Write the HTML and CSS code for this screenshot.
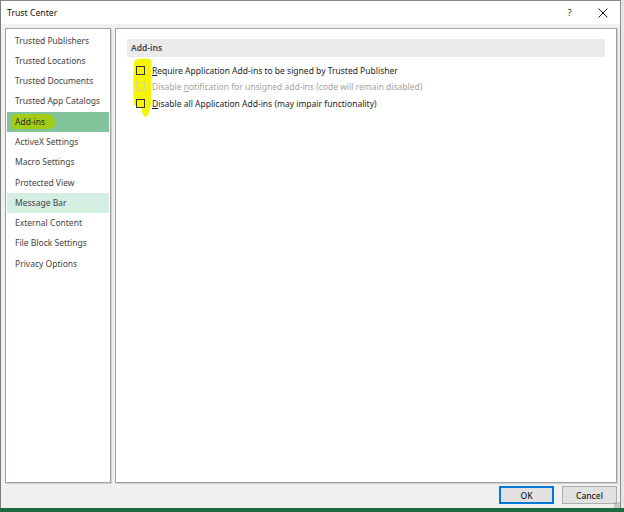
FILE: index.html
```html
<!DOCTYPE html>
<html>
<head>
<meta charset="utf-8">
<title>Trust Center</title>
<link rel="stylesheet" href="styles.css">
</head>
<body>
<div class="screen">
  <div class="window">
    <div class="titlebar">
      <span class="title">Trust Center</span>
      <span class="tb-btn help">?</span>
      <span class="tb-btn close">
        <svg width="10" height="10" viewBox="0 0 10 10"><path d="M0.5 0.5 L9.5 9.5 M9.5 0.5 L0.5 9.5" stroke="#222" stroke-width="1" fill="none"/></svg>
      </span>
    </div>
    <div class="body">
      <ul class="nav">
        <li>Trusted Publishers</li>
        <li>Trusted Locations</li>
        <li>Trusted Documents</li>
        <li>Trusted App Catalogs</li>
        <li class="selected"><span class="marker"></span><span class="label">Add-ins</span></li>
        <li>ActiveX Settings</li>
        <li>Macro Settings</li>
        <li>Protected View</li>
        <li class="hover">Message Bar</li>
        <li>External Content</li>
        <li>File Block Settings</li>
        <li>Privacy Options</li>
      </ul>
      <div class="main">
        <div class="section-head">Add-ins</div>
        <div class="options">
          <svg class="highlight" width="22" height="62" viewBox="0 0 22 62">
            <path d="M2.5 3 C6 0 15 0 19 2 L19 46 C18 52 16.5 57 14.5 58.5 C11.5 60 10 55 9.5 50 L2 47 C1 35 1 15 2.5 3 Z" fill="#f5f500"/>
          </svg>
          <label class="opt"><span class="box"></span><span><u>R</u>equire Application Add-ins to be signed by Trusted Publisher</span></label>
          <label class="opt disabled"><span class="box"></span><span>Disable <u>n</u>otification for unsigned add-ins (code will remain disabled)</span></label>
          <label class="opt"><span class="box"></span><span><u>D</u>isable all Application Add-ins (may impair functionality)</span></label>
        </div>
      </div>
    </div>
    <div class="footer">
      <button class="btn default">OK</button>
      <button class="btn">Cancel</button>
      <span class="grip"></span>
    </div>
  </div>
  <div class="taskbar"></div>
</div>
</body>
</html>
```

FILE: styles.css
```css
html, body {
  margin: 0;
  padding: 0;
}
body {
  background: #e6e6e6;
  font-family: "Noto Sans", "Open Sans", sans-serif;
  font-size: 8.5px;
  color: #333;
}
.screen {
  width: 624px;
  height: 512px;
  display: flex;
  flex-direction: column;
  overflow: hidden;
}
.window {
  width: 621px;
  height: 508px;
  box-sizing: border-box;
  border-top: 1px solid #8a8a8a;
  border-left: 1px solid #76807a;
  border-right: 1px solid #8c8c8c;
  background: #f0f0f0;
  display: flex;
  flex-direction: column;
  position: relative;
}
.titlebar {
  height: 23px;
  background: #ffffff;
  display: flex;
  align-items: center;
  padding-left: 6px;
  flex-shrink: 0;
}
.title {
  flex: 1;
  color: #111;
  font-size: 8.7px;
}
.tb-btn {
  width: 33px;
  display: flex;
  justify-content: center;
  align-items: center;
  color: #333;
}
.help {
  font-size: 9.5px;
}
.close {
  margin-right: 1px;
}
.body {
  display: flex;
  gap: 4px;
  padding: 4px 0 0 4px;
  height: 455px;
  flex-shrink: 0;
}
.nav {
  list-style: none;
  margin: 0;
  padding: 1.5px 1px 0 1px;
  width: 106px;
  box-sizing: border-box;
  background: #fff;
  border: 1px solid #a3a3a3;
  box-shadow: 1px 1px 0 #cfcfcf;
}
.nav li {
  height: 20.3px;
  line-height: 20.3px;
  padding-left: 8px;
  color: #444;
  position: relative;
  white-space: nowrap;
}
.nav li.selected {
  background: #82c39c;
  color: #2a2a2a;
}
.nav li.hover {
  background: #d4efe1;
}
.nav .marker {
  position: absolute;
  left: 4px;
  top: 2px;
  width: 44px;
  height: 15px;
  background: #a2cc16;
  border-radius: 5px 8px 6px 4px;
}
.nav .label {
  position: relative;
}
.main {
  width: 502px;
  box-sizing: border-box;
  background: #fff;
  border: 1px solid #a3a3a3;
  box-shadow: 1px 1px 0 #cfcfcf;
  padding: 10px 11px 0 11px;
}
.section-head {
  height: 18px;
  line-height: 18px;
  background: #ebebeb;
  padding-left: 4px;
  font-weight: 600;
  color: #444;
}
.options {
  position: relative;
  padding-top: 5px;
  padding-left: 9px;
}
.highlight {
  position: absolute;
  left: 5px;
  top: 1px;
}
.opt {
  position: relative;
  display: flex;
  align-items: center;
  height: 16.5px;
  color: #1e1e1e;
  white-space: nowrap;
}
.opt.disabled {
  color: #a3a3a3;
}
.box {
  width: 9px;
  height: 9px;
  box-sizing: border-box;
  border: 1px solid #333;
  margin-right: 7px;
  flex-shrink: 0;
}
.opt.disabled .box {
  border-color: #d9d98a;
}
.footer {
  flex: 1;
  display: flex;
  justify-content: flex-end;
  align-items: flex-start;
  gap: 8px;
  padding: 3px 3px 0 0;
  position: relative;
}
.btn {
  width: 55px;
  height: 18px;
  margin: 0;
  padding: 0;
  background: #e1e1e1;
  border: 1px solid #adadad;
  font-family: "Noto Sans", "Open Sans", sans-serif;
  font-size: 8.5px;
  font-weight: 500;
  color: #222;
}
.btn.default {
  border: 2px solid #0078d7;
}
.grip {
  position: absolute;
  right: 0;
  bottom: 0;
  width: 6px;
  height: 6px;
  background-image: radial-gradient(circle, #9a9a9a 0.6px, transparent 0.8px);
  background-size: 2px 2px;
}
.taskbar {
  height: 4px;
  background: #1f6b41;
}
```
